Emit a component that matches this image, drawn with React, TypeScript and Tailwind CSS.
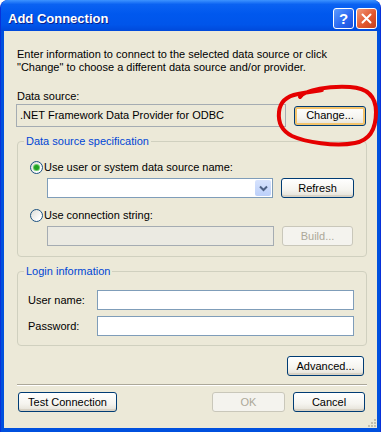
import React from 'react';

function XpButton({ label, w, disabled, focused }: { label: string; w: string; disabled?: boolean; focused?: boolean }) {
    const base = 'h-[20px] rounded-[3px] border flex items-center justify-center shrink-0';
    if (disabled) {
        return <div className={`${base} ${w} border-[#C9C7BA] bg-[#F4F3EE] text-[#ACA899]`}>{label}</div>;
    }
    return (
        <div
            className={`${base} ${w} border-[#003C74] bg-[linear-gradient(to_bottom,#FFFFFF_0%,#F5F4EF_60%,#E3E0D6_100%)] text-black ${
                focused ? 'shadow-[inset_0_0_0_2px_#F4C46C]' : 'shadow-[inset_0_-2px_0_#D8D2C5]'
            }`}
        >
            {label}
        </div>
    );
}

function Radio({ checked }: { checked?: boolean }) {
    return (
        <span className="w-[13px] h-[13px] rounded-full border border-[#1C5180] bg-[linear-gradient(135deg,#DCDCD7_0%,#FFFFFF_80%)] flex items-center justify-center shrink-0">
            {checked && <span className="w-[5px] h-[5px] rounded-full bg-[#21A121] shadow-[0_0_0_1px_#6BCB6B]" />}
        </span>
    );
}

function GroupBox({ title, className, legendClass, children }: { title: string; className?: string; legendClass: string; children: React.ReactNode }) {
    return (
        <fieldset className={`border border-[#D0D0BF] rounded-[4px] mr-[10px] ${className ?? ''}`}>
            <legend className={`px-[2px] text-[#0046D5] leading-[13px] ${legendClass}`}>{title}</legend>
            {children}
        </fieldset>
    );
}

export default function App() {
    return (
        <div className="relative w-[386px] h-[432px] bg-white overflow-hidden font-['Liberation_Sans',sans-serif] text-[11px] text-black">
            <div className="w-[381px] h-[432px] flex flex-col rounded-t-[8px] bg-[#0050DE] border-x border-[#0831D9]">
                {/* title bar */}
                <div className="h-[31px] shrink-0 rounded-t-[7px] bg-[linear-gradient(to_bottom,#3D93FF_0%,#0A62F2_14%,#0058EE_45%,#0055EA_80%,#0049DA_100%)] flex items-center pt-[6px] pl-[7px] pr-[3px]">
                    <span className="text-white font-bold text-[13px] [text-shadow:1px_1px_0_#0A1E8C]">Add Connection</span>
                    <div className="ml-auto flex gap-[2px]">
                        <div className="w-[21px] h-[21px] rounded-[3px] border border-white bg-[linear-gradient(135deg,#5C9BFF_0%,#2866F0_60%,#1C4FD8_100%)] flex items-center justify-center text-white font-bold text-[15px] leading-none">
                            ?
                        </div>
                        <div className="w-[21px] h-[21px] rounded-[3px] border border-white bg-[linear-gradient(135deg,#F09A7A_0%,#E2572F_55%,#C4401E_100%)] flex items-center justify-center">
                            <svg width="11" height="11" viewBox="0 0 11 11">
                                <path d="M1.5 1.5 L9.5 9.5 M9.5 1.5 L1.5 9.5" stroke="white" strokeWidth="2" strokeLinecap="round" />
                            </svg>
                        </div>
                    </div>
                </div>

                {/* body */}
                <div className="relative mx-[3px] mb-[4px] flex-1 bg-[#ECE9D8] pl-[13px] flex flex-col">
                    <div className="mt-[17px] leading-[13px]">
                        <div>Enter information to connect to the selected data source or click</div>
                        <div>"Change" to choose a different data source and/or provider.</div>
                    </div>

                    <div className="mt-[16px] leading-[13px]">Data source:</div>
                    <div className="mt-[1px] flex items-center">
                        <div className="-ml-[1px] w-[270px] h-[23px] border border-[#A5ACB2] flex items-center pl-[3px]">
                            .NET Framework Data Provider for ODBC
                        </div>
                        <div className="ml-[8px]">
                            <XpButton label="Change..." w="w-[72px]" focused />
                        </div>
                    </div>

                    <GroupBox title="Data source specification" className="mt-[8px] pl-[12px] pb-[10px]" legendClass="-ml-[6px]">
                        <div className="mt-[13px] flex items-center gap-[1px] leading-[13px]">
                            <Radio checked />
                            <span>Use user or system data source name:</span>
                        </div>
                        <div className="mt-[4px] ml-[17px] flex items-center gap-[8px]">
                            <div className="w-[226px] h-[20px] border border-[#7F9DB9] bg-white flex justify-end p-[1px]">
                                <div className="w-[16px] h-full rounded-[2px] bg-[linear-gradient(to_bottom,#D7E3FD_0%,#BCD0FA_100%)] flex items-center justify-center">
                                    <svg width="9" height="7" viewBox="0 0 9 7">
                                        <path d="M1 1.5 L4.5 5 L8 1.5" fill="none" stroke="#4D6185" strokeWidth="2" />
                                    </svg>
                                </div>
                            </div>
                            <XpButton label="Refresh" w="w-[73px]" />
                        </div>
                        <div className="mt-[11px] flex items-center gap-[1px] leading-[13px]">
                            <Radio />
                            <span>Use connection string:</span>
                        </div>
                        <div className="mt-[4px] ml-[17px] flex items-center gap-[8px]">
                            <div className="w-[227px] h-[20px] border border-[#A5ACB2] bg-[#EBEAE2]" />
                            <XpButton label="Build..." w="w-[71px]" disabled />
                        </div>
                    </GroupBox>

                    <GroupBox title="Login information" className="mt-[8px] pl-[10px] pb-[9px]" legendClass="-ml-[4px]">
                        <div className="mt-[12px] flex items-center">
                            <span className="w-[69px]">User name:</span>
                            <div className="w-[257px] h-[20px] border border-[#7F9DB9] bg-white" />
                        </div>
                        <div className="mt-[6px] flex items-center">
                            <span className="w-[69px]">Password:</span>
                            <div className="w-[257px] h-[20px] border border-[#7F9DB9] bg-white" />
                        </div>
                    </GroupBox>

                    <div className="mt-[10px] flex justify-end pr-[13px]">
                        <XpButton label="Advanced..." w="w-[77px]" />
                    </div>

                    <div className="mt-[8px] mr-[10px] h-[2px] border-t border-[#ACA899] border-b border-b-white" />

                    <div className="mt-[6px] flex items-center pr-[12px]">
                        <div className="ml-[1px]">
                            <XpButton label="Test Connection" w="w-[99px]" />
                        </div>
                        <div className="ml-auto flex gap-[8px]">
                            <XpButton label="OK" w="w-[73px]" disabled />
                            <XpButton label="Cancel" w="w-[72px]" />
                        </div>
                    </div>

                    {/* size grip */}
                    <div className="absolute right-[1px] bottom-[1px] grid grid-cols-3 gap-[1px]">
                        <span />
                        <span />
                        <span className="w-[2px] h-[2px] bg-[#C2BFAE]" />
                        <span />
                        <span className="w-[2px] h-[2px] bg-[#C2BFAE]" />
                        <span className="w-[2px] h-[2px] bg-[#C2BFAE]" />
                        <span className="w-[2px] h-[2px] bg-[#C2BFAE]" />
                        <span className="w-[2px] h-[2px] bg-[#C2BFAE]" />
                        <span className="w-[2px] h-[2px] bg-[#C2BFAE]" />
                    </div>
                </div>
            </div>

            {/* hand-drawn red annotation */}
            <svg className="absolute left-0 top-0 pointer-events-none" width="386" height="432" viewBox="0 0 386 432">
                <path
                    d="M300 97 C306 89, 330 86, 350 87 C368 88, 376 97, 376 112 C376 128, 371 140, 355 143 C335 147, 305 142, 292 136 C282 131, 278 122, 279 112 C280 101, 287 96, 298 94 C309 92, 316 91, 322 90"
                    fill="none"
                    stroke="#E50000"
                    strokeWidth="4"
                    strokeLinecap="round"
                />
            </svg>
        </div>
    );
}
